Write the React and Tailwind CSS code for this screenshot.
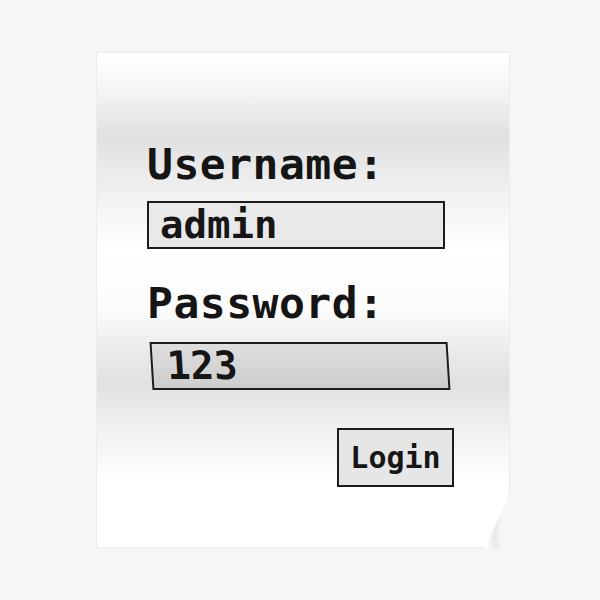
const mono = "font-['DejaVu_Sans_Mono','Liberation_Mono',monospace]";

const Field = ({ value, tone, tilt }) => (
  <div
    className={`w-[298px] h-[48px] border-2 border-[#1c1c1c] flex items-center pl-[11px] text-[39px] font-bold text-[#161616] ${tone} ${tilt}`}
  >
    {value}
  </div>
);

export default function App() {
  return (
    <div className={`w-[600px] h-[600px] bg-[#f6f6f6] pt-[52px] pl-[96px] ${mono}`}>
      <div className="relative w-[414px] h-[496px] border border-[#ececec] bg-[linear-gradient(to_bottom,#ffffff_0%,#f4f4f4_8%,#e0e0e0_17%,#f2f2f2_29%,#ffffff_40%,#fbfbfb_52%,#e8e8e8_62%,#e1e1e1_67%,#f2f2f2_77%,#ffffff_87%,#ffffff_100%)] pl-[50px] pt-[86px] flex flex-col">
        <div className="text-[43px] leading-[50px] font-bold text-[#151515] tracking-[0.5px]">
          Username:
        </div>
        <div className="mt-[12px]">
          <Field value="admin" tone="bg-[#e9e9e9]" tilt="" />
        </div>
        <div className="mt-[29px] text-[43px] leading-[50px] font-bold text-[#151515] tracking-[0.5px]">
          Password:
        </div>
        <div className="mt-[14px] ml-[4px]">
          <Field
            value="123"
            tone="bg-[linear-gradient(to_bottom,#dedede,#cdcdcd)] pl-[14px]"
            tilt="skew-x-[3.5deg]"
          />
        </div>
        <div className="mt-[38px] ml-[190px] w-[117px] h-[59px] border-2 border-[#1c1c1c] bg-[#e6e6e6] flex items-center justify-center text-[30px] font-bold text-[#161616]">
          Login
        </div>
        <div className="absolute right-[-2px] bottom-[-2px] w-[26px] h-[60px] bg-[linear-gradient(to_left,#f6f6f6_40%,#e9e9e9_60%,#ffffff)] [clip-path:polygon(100%_0,100%_100%,0_100%)]" />
      </div>
    </div>
  );
}
